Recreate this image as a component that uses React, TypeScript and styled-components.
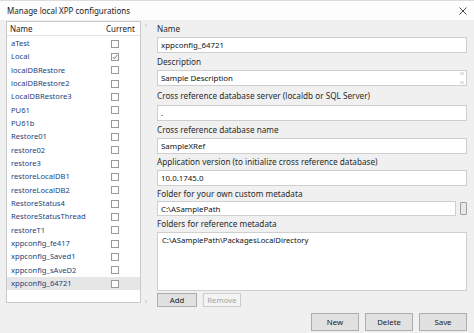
import React from "react";
import styled, { createGlobalStyle } from "styled-components";

const Global = createGlobalStyle`
  html, body { margin: 0; padding: 0; background: #f0f0f0; }
  body { font-family: "Noto Sans", "Open Sans", sans-serif; }
  * { box-sizing: border-box; }
`;

const Window = styled.div`
  width: 474px;
  height: 333px;
  background: #f0f0f0;
  display: flex;
  flex-direction: column;
  overflow: hidden;
  font-family: "Noto Sans", "Open Sans", sans-serif;
  font-size: 7.8px;
  color: #222;
`;

const TitleBar = styled.div`
  height: 20px;
  background: #fdfdfd;
  border-top: 1px solid #dcdcdc;
  display: flex;
  align-items: center;
  justify-content: space-between;
  padding: 0 7px 0 7px;
  font-size: 8px;
  color: #1a1a1a;
`;

const Main = styled.div`
  display: flex;
  padding: 1px 7px 0 6px;
  height: 287px;
`;

const ListBox = styled.div`
  width: 135px;
  height: 282px;
  background: #fff;
  border: 1px solid #c9c9c9;
  display: flex;
  flex-direction: column;
`;

const HeaderRow = styled.div`
  display: grid;
  grid-template-columns: 1fr 34px;
  height: 14px;
  align-items: center;
  border-bottom: 1px solid #e3e3e3;
  padding-left: 3px;
  color: #222;
  font-size: 8px;
  line-height: 14px;
`;

const Row = styled.div<{ $selected?: boolean }>`
  display: grid;
  grid-template-columns: 1fr 34px;
  height: 13.33px;
  align-items: center;
  padding-left: 4px;
  background: ${(p) => (p.$selected ? "#e6e6e6" : "transparent")};
  color: #233f7c;
  font-size: 7.6px;
  line-height: 13px;
  white-space: nowrap;
`;

const RowsWrap = styled.div`
  padding-top: 1px;
`;

const CheckCell = styled.div`
  display: flex;
  justify-content: flex-start;
  padding-left: 5px;
`;

const Box = styled.div`
  width: 8px;
  height: 8px;
  border: 1px solid #9a9a9a;
  background: #fff;
  display: flex;
  align-items: center;
  justify-content: center;
`;

const Splitter = styled.div`
  width: 9px;
  display: flex;
  flex-direction: column;
  justify-content: space-between;
  align-items: center;
  padding: 3px 0 4px 0;
`;

const SplitMark = styled.div`
  width: 2px;
  height: 3px;
  background: #dadada;
`;

const Panel = styled.div`
  flex: 1;
  display: flex;
  flex-direction: column;
  padding-left: 7px;
`;

const Label = styled.div<{ $h?: number }>`
  height: ${(p) => p.$h ?? 16}px;
  line-height: ${(p) => p.$h ?? 16}px;
  color: #2a2a2a;
  font-size: 8.2px;
  white-space: nowrap;
`;

const InputRow = styled.div`
  display: flex;
  align-items: center;
  gap: 4px;
`;

const Input = styled.div<{ $h?: number }>`
  flex: 1;
  height: ${(p) => p.$h ?? 15}px;
  background: #fff;
  border: 1px solid #cfcfcf;
  display: flex;
  align-items: center;
  padding-left: 3px;
  font-size: 7.9px;
  color: #111;
  position: relative;
  white-space: nowrap;
`;

const ScrollHint = styled.div`
  position: absolute;
  right: 1px;
  top: 1px;
  bottom: 1px;
  width: 6px;
  display: flex;
  flex-direction: column;
  justify-content: space-between;
  align-items: center;
`;

const ScrollTick = styled.div`
  width: 4px;
  height: 3px;
  background: #e4e4e4;
`;

const BrowseButton = styled.div`
  width: 7px;
  height: 13px;
  border: 1px solid #a0a0a0;
  border-radius: 1px;
  background: #e8e8e8;
`;

const TextArea = styled.div`
  height: 59px;
  background: #fff;
  border: 1px solid #cfcfcf;
  padding: 2px 4px;
  font-size: 7.7px;
  color: #111;
  white-space: nowrap;
`;

const SmallButtons = styled.div`
  display: flex;
  gap: 6px;
  margin-top: 2px;
`;

const Button = styled.div<{ $w: number; $h: number; $disabled?: boolean }>`
  width: ${(p) => p.$w}px;
  height: ${(p) => p.$h}px;
  border: 1px solid ${(p) => (p.$disabled ? "#cccccc" : "#adadad")};
  background: ${(p) => (p.$disabled ? "#f4f4f4" : "#e1e1e1")};
  color: ${(p) => (p.$disabled ? "#a3a3a3" : "#1a1a1a")};
  display: flex;
  align-items: center;
  justify-content: center;
  font-size: 7.8px;
`;

const Footer = styled.div`
  display: flex;
  justify-content: flex-end;
  gap: 6px;
  padding: 6px 7px 0 0;
`;

const items = [
  "aTest",
  "Local",
  "localDBRestore",
  "localDBRestore2",
  "LocalDBRestore3",
  "PU61",
  "PU61b",
  "Restore01",
  "restore02",
  "restore3",
  "restoreLocalDB1",
  "restoreLocalDB2",
  "RestoreStatus4",
  "RestoreStatusThread",
  "restoreT1",
  "xppconfig_fe417",
  "xppconfig_Saved1",
  "xppconfig_sAveD2",
  "xppconfig_64721",
];

export default function App() {
  return (
    <>
      <Global />
      <Window>
        <TitleBar>
          <span>Manage local XPP configurations</span>
          <svg width="8" height="8" viewBox="0 0 8 8">
            <path d="M0.5 0.5 L7.5 7.5 M7.5 0.5 L0.5 7.5" stroke="#333" strokeWidth="0.9" />
          </svg>
        </TitleBar>
        <Main>
          <ListBox>
            <HeaderRow>
              <span>Name</span>
              <span>Current</span>
            </HeaderRow>
            <RowsWrap>
              {items.map((name) => (
                <Row key={name} $selected={name === "xppconfig_64721"}>
                  <span>{name}</span>
                  <CheckCell>
                    <Box>
                      {name === "Local" && (
                        <svg width="6" height="6" viewBox="0 0 6 6">
                          <path d="M0.8 3 L2.4 4.8 L5.4 0.8" stroke="#777" strokeWidth="1" fill="none" />
                        </svg>
                      )}
                    </Box>
                  </CheckCell>
                </Row>
              ))}
            </RowsWrap>
          </ListBox>
          <Splitter>
            <SplitMark />
            <SplitMark />
          </Splitter>
          <Panel>
            <Label>Name</Label>
            <Input>xppconfig_64721</Input>
            <Label $h={17}>Description</Label>
            <Input $h={18}>
              Sample Description
              <ScrollHint>
                <ScrollTick />
                <ScrollTick />
              </ScrollHint>
            </Input>
            <Label $h={19}>Cross reference database server (localdb or SQL Server)</Label>
            <Input>.</Input>
            <Label $h={17}>Cross reference database name</Label>
            <Input>SampleXRef</Input>
            <Label>Application version (to initialize cross reference database)</Label>
            <Input>10.0.1745.0</Input>
            <Label $h={15}>Folder for your own custom metadata</Label>
            <InputRow>
              <Input>C:\ASamplePath</Input>
              <BrowseButton />
            </InputRow>
            <Label>Folders for reference metadata</Label>
            <TextArea>C:\ASamplePath\PackagesLocalDirectory</TextArea>
            <SmallButtons>
              <Button $w={40} $h={14}>Add</Button>
              <Button $w={38} $h={14} $disabled>Remove</Button>
            </SmallButtons>
          </Panel>
        </Main>
        <Footer>
          <Button $w={48} $h={18}>New</Button>
          <Button $w={48} $h={18}>Delete</Button>
          <Button $w={48} $h={18}>Save</Button>
        </Footer>
      </Window>
    </>
  );
}
